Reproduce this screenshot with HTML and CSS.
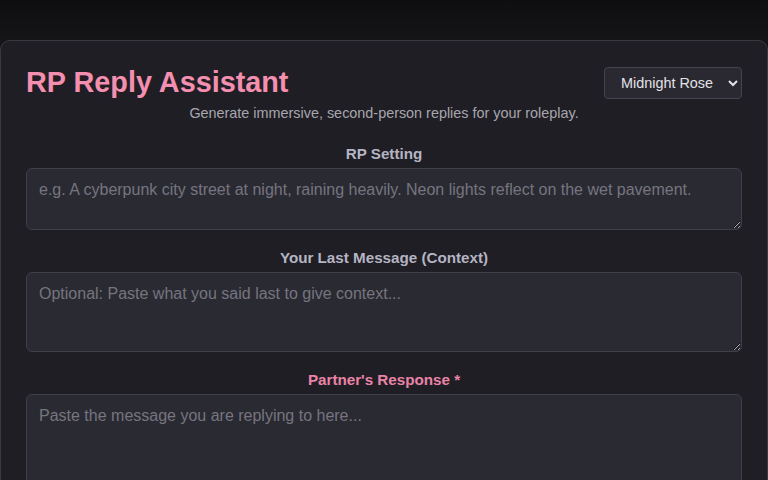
FILE: index.html
```html
<!DOCTYPE html>
<html lang="en">
<head>
<meta charset="utf-8">
<title>RP Reply Assistant</title>
<link rel="stylesheet" href="styles.css">
</head>
<body>
<main class="card">
  <header class="header">
    <h1 class="title">RP Reply Assistant</h1>
    <select class="theme-select">
      <option>Midnight Rose</option>
      <option>Ocean Night</option>
    </select>
  </header>
  <p class="subtitle">Generate immersive, second-person replies for your roleplay.</p>

  <div class="field">
    <label class="label" for="setting">RP Setting</label>
    <textarea id="setting" class="input input-setting" placeholder="e.g. A cyberpunk city street at night, raining heavily. Neon lights reflect on the wet pavement."></textarea>
  </div>

  <div class="field">
    <label class="label" for="last">Your Last Message (Context)</label>
    <textarea id="last" class="input input-last" placeholder="Optional: Paste what you said last to give context..."></textarea>
  </div>

  <div class="field">
    <label class="label label-required" for="partner">Partner's Response *</label>
    <textarea id="partner" class="input input-partner" placeholder="Paste the message you are replying to here..."></textarea>
  </div>
</main>
</body>
</html>
```

FILE: styles.css
```css
html, body {
  margin: 0;
  padding: 0;
}

body {
  background: linear-gradient(180deg, #0e0e10 0px, #151517 40px, #151517 100%);
  font-family: "Liberation Sans", Arial, sans-serif;
  min-height: 480px;
  padding-top: 40px;
  box-sizing: border-box;
}

.card {
  background: #1f1e24;
  border: 1px solid #3a3941;
  border-radius: 10px;
  padding: 25px 25px 40px;
  min-height: 600px;
  box-sizing: border-box;
}

.header {
  display: flex;
  justify-content: space-between;
  align-items: flex-start;
}

.title {
  margin: 0;
  font-size: 28.8px;
  line-height: 32px;
  font-weight: 700;
  color: #f48fb0;
}

.theme-select {
  margin-top: 1px;
  height: 32px;
  width: 138px;
  padding: 0 8px 0 12px;
  background: #2a2931;
  color: #e2e2e8;
  border: 1px solid #45444e;
  border-radius: 4px;
  font-family: "Liberation Sans", Arial, sans-serif;
  font-size: 14.4px;
  color-scheme: dark;
}

.subtitle {
  margin: 6px 0 0;
  text-align: center;
  font-size: 14.4px;
  line-height: 17px;
  color: #a7a6ae;
}

.field {
  display: flex;
  flex-direction: column;
  margin-top: 23px;
}

.field + .field {
  margin-top: 19px;
}

.label {
  text-align: center;
  font-size: 15.2px;
  line-height: 18px;
  font-weight: 700;
  color: #b5b4c3;
  margin-bottom: 5px;
}

.label-required {
  color: #ea84a7;
}

.input {
  display: block;
  width: 100%;
  box-sizing: border-box;
  background: #2a2a33;
  border: 1px solid #3f3e4a;
  border-radius: 6px;
  padding: 11px 12px;
  font-family: "Liberation Sans", Arial, sans-serif;
  font-size: 16px;
  line-height: 19px;
  color: #e6e6ec;
  color-scheme: dark;
}

.input::placeholder {
  color: #76757f;
}

.input-setting {
  height: 62px;
}

.input-last {
  height: 80px;
}

.input-partner {
  height: 140px;
}
```
